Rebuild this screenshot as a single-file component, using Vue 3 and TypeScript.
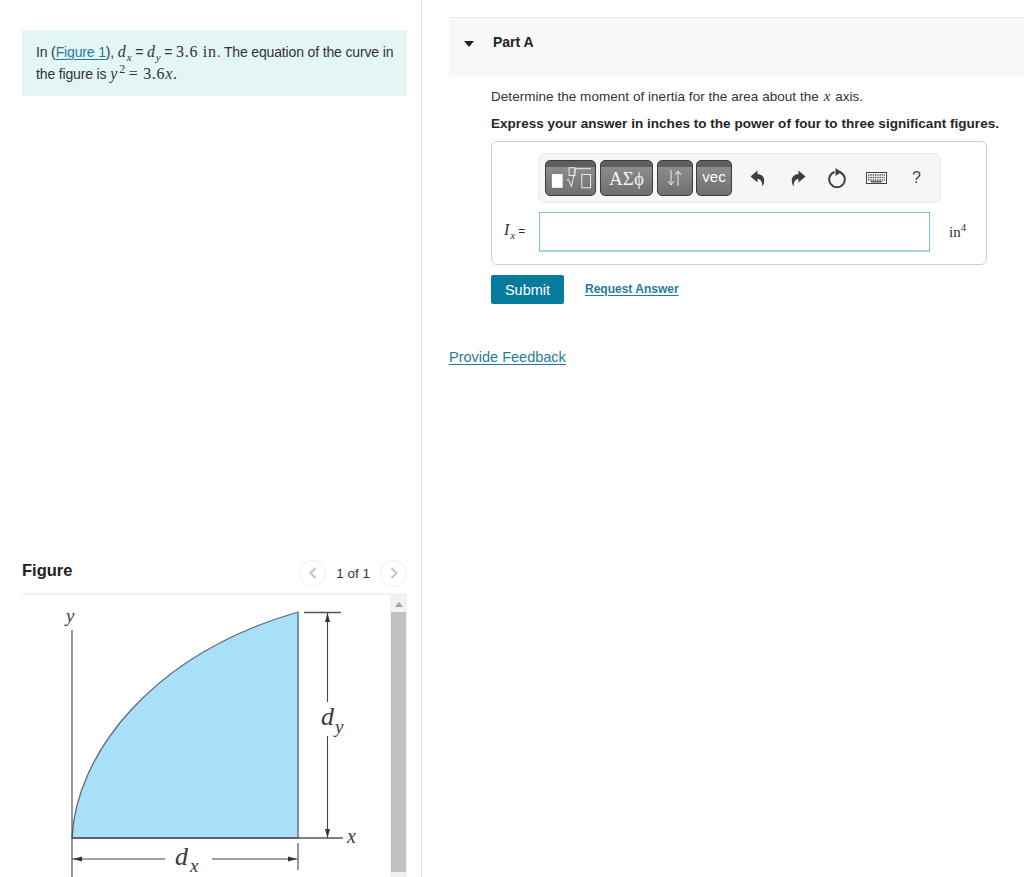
<template>
  <div class="page">
    <!-- left column -->
    <section class="left">
      <div class="intro">
        In (<a class="link">Figure 1</a>), <i class="m">d<sub>x</sub></i> = <i class="m">d<sub>y</sub></i> = <span class="m num">3.6 in</span>. The equation of the curve in<br />
        the figure is <i class="m">y</i><sup class="m">2</sup> <span class="m num">= 3.6<i>x</i>.</span>
      </div>

      <div class="figure-head">
        <h3>Figure</h3>
        <div class="pager">
          <span class="circle">
            <svg width="8" height="12" viewBox="0 0 8 12"><path d="M6.500 1 L1.500 6 L6.500 11" /></svg>
          </span>
          <span class="count">1 of 1</span>
          <span class="circle">
            <svg width="8" height="12" viewBox="0 0 8 12"><path d="M1.500 1 L6.500 6 L1.500 11" /></svg>
          </span>
        </div>
      </div>

      <div class="figure-body">
        <svg class="drawing" width="368" height="282" viewBox="22 595 368 282">
          <path class="area" d="M72 838 C76 755 150 655 298 612 L298 838 Z" />
          <path class="edge" d="M298 612 V838" />
          <path class="ln" d="M72 630 V877" />
          <path class="ln thick" d="M72 838 H343" />
          <path class="ln thick" d="M304 612.500 H341" />
          <path class="ln" d="M327.500 613 V702 M327.500 736 V838" />
          <path class="ln" d="M72 859 H165 M212 859 H297" />
          <path class="ln" d="M298 843 V870" />
          <path class="head" d="M327.500 613 L325 622 H330 Z M327.500 838 L325 829 H330 Z M73 859 L82 856.500 V861.500 Z M297 859 L288 856.500 V861.500 Z" />
          <text class="ft" x="66" y="622" font-size="19">y</text>
          <text class="ft" x="175" y="865" font-size="26">d</text>
          <text class="ft" x="190" y="872" font-size="19">x</text>
          <text class="ft" x="321" y="725" font-size="26">d</text>
          <text class="ft" x="335" y="733" font-size="19">y</text>
          <text class="ft" x="347" y="843" font-size="20">x</text>
        </svg>
        <div class="scrollbar">
          <span class="up"></span>
          <span class="thumb"></span>
        </div>
      </div>
    </section>

    <!-- right column -->
    <section class="right">
      <div class="part-head">
        <span class="caret"></span>
        <span class="part-title">Part A</span>
      </div>

      <div class="part-body">
        <p class="q">Determine the moment of inertia for the area about the <i class="m">x</i> axis.</p>
        <p class="q strong">Express your answer in inches to the power of four to three significant figures.</p>

        <div class="answer">
          <div class="toolbar">
            <div class="btns">
              <span class="tbtn w51">
                <svg width="50" height="34" viewBox="0 0 50 34">
                  <rect x="6" y="13" width="11" height="14" fill="#fff" />
                  <rect class="thin" x="23.500" y="6.500" width="6" height="8" />
                  <path class="thin" d="M21 19 L23 18.500 L26 26 L30 7.500 H46" />
                  <rect class="thin" x="36.500" y="13.500" width="9" height="13.500" />
                </svg>
              </span>
              <span class="tbtn w53 greek">ΑΣϕ</span>
              <span class="tbtn w36">
                <svg width="20" height="18" viewBox="0 0 20 18">
                  <path class="thin" d="M6 1 V15 M3 12 L6 16 L9 12 M13 17 V3 M10 6 L13 2 L16 6" />
                </svg>
              </span>
              <span class="tbtn w36 vec">vec</span>
            </div>
            <div class="tools">
              <svg width="16" height="17" viewBox="0 0 16 17"><path class="solid" d="M7.500 0.500 L0.500 6.500 L7.500 12.500 V9 C10.500 9 12 11 12.500 16.500 C15.500 11 15 4.500 7.500 4 Z" /></svg>
              <svg width="16" height="17" viewBox="0 0 16 17"><path class="solid" d="M8.500 0.500 L15.500 6.500 L8.500 12.500 V9 C5.500 9 4 11 3.500 16.500 C0.500 11 1 4.500 8.500 4 Z" /></svg>
              <svg width="18" height="20" viewBox="0 0 18 20"><path class="ring" d="M6.500 4 A7.800 7.800 0 1 0 11.500 4" /><path class="solid" d="M7.500 0 L13.500 4 L7.500 8 Z" /></svg>
              <svg class="kb" width="21" height="12" viewBox="0 0 21 12">
                <rect x="0.500" y="0.500" width="20" height="11" fill="#fff" stroke="#444" />
                <path d="M2 3 H19 M2 5.500 H19 M2 8 H19" stroke="#555" stroke-width="1.500" stroke-dasharray="1.500 0.800" />
                <path d="M5 9.800 H16" stroke="#333" stroke-width="1.200" />
              </svg>
              <span class="help">?</span>
            </div>
          </div>

          <div class="input-row">
            <span class="var"><i class="m">I<sub>x</sub></i><span class="eq">=</span></span>
            <div class="field"></div>
            <span class="unit">in<sup>4</sup></span>
          </div>
        </div>

        <div class="actions">
          <button class="submit">Submit</button>
          <a class="link bold">Request Answer</a>
        </div>
      </div>

      <a class="link feedback">Provide Feedback</a>
    </section>
  </div>
</template>

<script setup lang="ts">
</script>

<style>
html, body { margin: 0; background: #fff; overflow: hidden; }
</style>

<style scoped>
.page {
  display: flex;
  width: 1024px;
  height: 877px;
  overflow: hidden;
  font-family: "Liberation Sans", Arial, sans-serif;
  font-size: 14px;
  color: #333;
}

.m { font-family: "Liberation Serif", "Times New Roman", serif; font-size: 16px; line-height: 0; }
.m sub { font-size: 11px; line-height: 0; margin-left: 1px; }
sup.m { font-size: 12px; line-height: 0; margin-left: 2px; }
.num { letter-spacing: 0.7px; }

.link {
  color: #1f7d9c;
  text-decoration: underline;
  text-underline-offset: 2px;
}

/* left */
.left {
  width: 422px;
  box-sizing: border-box;
  padding: 30px 14px 0 22px;
  border-right: 1px solid #d9e0ea;
  flex: none;
  display: flex;
  flex-direction: column;
}

.intro {
  height: 66px;
  box-sizing: border-box;
  padding: 11px 0 0 14px;
  background: #e4f5f6;
  line-height: 22px;
  font-size: 14px;
  letter-spacing: -0.15px;
  white-space: nowrap;
}

.figure-head {
  margin-top: 461px;
  height: 36px;
  display: flex;
  align-items: center;
  justify-content: space-between;
  border-bottom: 2px solid #f2f2f2;
}

.figure-head h3 {
  margin: 0 0 9px;
  font-size: 16.500px;
  color: #222;
}

.pager {
  display: flex;
  align-items: center;
  gap: 10px;
  font-size: 13.500px;
  margin-top: -4px;
}

.circle {
  width: 25px;
  height: 25px;
  border: 1px solid #eeeeee;
  border-radius: 50%;
  display: flex;
  align-items: center;
  justify-content: center;
}

.circle path {
  fill: none;
  stroke: #c4c4c4;
  stroke-width: 2;
}

.figure-body {
  display: flex;
  flex: 1;
  min-height: 0;
}

.drawing { flex: none; display: block; }

.area { fill: #a8dff9; stroke: #5f6b72; stroke-width: 1.300; }
.edge { stroke: #6d919f; stroke-width: 1.500; fill: none; }
.ln { stroke: #444; stroke-width: 1.100; fill: none; }
.thick { stroke: #555; stroke-width: 1.600; }
.head { fill: #333; }
.ft {
  font-family: "Liberation Serif", "Times New Roman", serif;
  font-style: italic;
  fill: #3a3a3a;
}

.scrollbar {
  width: 17px;
  background: #f1f1f1;
  display: flex;
  flex-direction: column;
  align-items: center;
}

.up {
  margin: 7px 0 5px;
  width: 0;
  height: 0;
  border-left: 4px solid transparent;
  border-right: 4px solid transparent;
  border-bottom: 5px solid #a3a3a3;
}

.thumb {
  width: 15px;
  height: 260px;
  background: #c1c1c1;
}

/* right */
.right {
  flex: 1;
  min-width: 0;
  box-sizing: border-box;
  padding: 17px 0 0 27px;
}

.part-head {
  height: 60px;
  box-sizing: border-box;
  border-top: 1px solid #ececec;
  background: #f8f8f8;
  display: flex;
  align-items: flex-start;
  padding: 16px 0 0 15px;
}

.caret {
  margin-top: 7px;
  width: 0;
  height: 0;
  border-left: 5px solid transparent;
  border-right: 5px solid transparent;
  border-top: 6px solid #222;
}

.part-title {
  margin-left: 19px;
  font-weight: 700;
  font-size: 14px;
  color: #222;
}

.part-body {
  width: 496px;
  margin-left: 42px;
}

.q {
  margin: 0;
  line-height: 20px;
  font-size: 13.500px;
  letter-spacing: 0.04px;
  white-space: nowrap;
}
.q:first-child { margin-top: 10px; }
.q .m { font-size: 15px; margin: 0 1px; }
.strong { margin-top: 7px; font-weight: 700; color: #262626; letter-spacing: 0.03px; }

.answer {
  margin-top: 7px;
  height: 124px;
  box-sizing: border-box;
  border: 1px solid #cfcfcf;
  border-radius: 6px;
  padding-top: 11px;
}

.toolbar {
  margin-left: 46px;
  width: 403px;
  height: 50px;
  box-sizing: border-box;
  background: #f6f6f6;
  border: 1px solid #e8e8e8;
  border-radius: 7px;
  display: flex;
  align-items: center;
  padding-left: 6px;
}

.btns { display: flex; gap: 4px; }

.tbtn {
  height: 36px;
  box-sizing: border-box;
  border: 1px solid #3c3c3c;
  border-radius: 5px;
  background: linear-gradient(to bottom, #5f5f5f 0, #5f5f5f 6px, #8c8c8c 6px, #6f6f6f 100%);
  color: #fff;
  display: flex;
  align-items: center;
  justify-content: center;
}

.w51 { width: 51px; }
.w53 { width: 53px; }
.w36 { width: 36px; }
.w36:last-child { margin-left: -1px; }
.greek { font-family: "Liberation Serif", serif; font-size: 19px; padding-top: 2px; color: #f2f2f2; }
.vec { font-size: 15px; padding-bottom: 3px; }
.thin { fill: none; stroke: #eee; stroke-width: 1; }

.tools {
  display: flex;
  align-items: center;
  margin-left: 18px;
}

.tools > svg { flex: none; }
.tools > svg:nth-child(2) { margin-left: 24px; }
.tools > svg:nth-child(3) { margin-left: 22px; }
.kb { margin-left: 20px; }
.solid { fill: #3f3f3f; }
.ring { fill: none; stroke: #3f3f3f; stroke-width: 2; }
.help { margin-left: 25px; font-size: 16px; color: #444; }

.input-row {
  margin-top: 9px;
  display: flex;
  align-items: center;
}

.var {
  width: 47px;
  box-sizing: border-box;
  padding: 0 0 4px 12px;
  white-space: nowrap;
}

.var .m { font-size: 16px; }
.var sub { font-size: 11px; }
.var .eq { font-size: 12px; margin-left: 3px; }

.field {
  width: 391px;
  height: 40px;
  box-sizing: border-box;
  border: 1px solid #7fbdd2;
  border-bottom: 2px solid #a9d3e0;
}

.unit {
  margin-left: 19px;
  font-family: "Liberation Serif", serif;
  font-size: 15px;
}

.unit sup { font-size: 11px; line-height: 0; }

.actions {
  margin-top: 10px;
  display: flex;
  align-items: center;
}

.submit {
  width: 73px;
  height: 29px;
  border: 0;
  border-radius: 2px;
  background: #067b9e;
  color: #fff;
  font-family: inherit;
  font-size: 14.500px;
  padding: 0;
}

.bold {
  margin: 0 0 2px 21px;
  font-weight: 700;
  font-size: 12px;
}

.feedback {
  display: inline-block;
  margin-top: 45px;
  font-size: 14.500px;
}
</style>
